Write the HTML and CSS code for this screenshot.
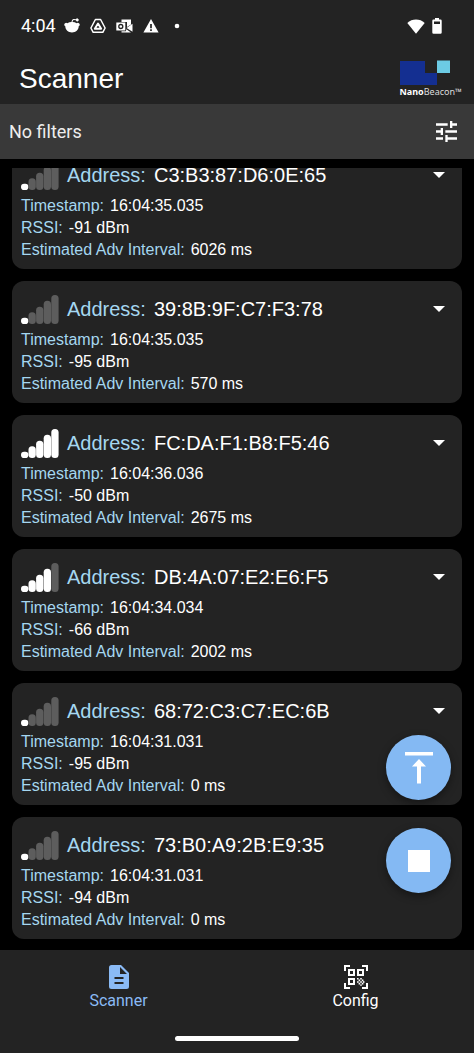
FILE: index.html
```html
<!DOCTYPE html>
<html lang="en">
<head>
<meta charset="utf-8">
<meta name="viewport" content="width=device-width, initial-scale=1">
<title>Scanner</title>
<link rel="stylesheet" href="styles.css">
</head>
<body>
<svg class="defs" aria-hidden="true">
  <symbol id="signal" viewBox="0 0 38 29">
    <rect class="b1" x="0" y="22.800" width="7.400" height="6.200" rx="3.100"/>
    <rect class="b2" x="7.500" y="17.300" width="7.300" height="11.700" rx="3.500"/>
    <rect class="b3" x="15.100" y="11.700" width="7.300" height="17.300" rx="3.500"/>
    <rect class="b4" x="22.700" y="5.700" width="7.300" height="23.300" rx="3.500"/>
    <rect class="b5" x="30.300" y="0" width="7.300" height="29" rx="3.500"/>
  </symbol>
  <symbol id="caret" viewBox="0 0 12 6"><path d="M0 0h12L6 6z"/></symbol>
</svg>
<div class="app">
  <header class="top">
    <div class="status">
      <span class="clock">4:04</span>
      <svg class="s-icon" viewBox="0 0 16 16"><path d="M.3 6.200a1.900 1.900 0 0 1 3-1C4.600 4.500 6.100 4.200 7.500 4.100 7.700 2.500 8.300.9 9.800.9L12 1.300a1.400 1.400 0 1 1-.1 1L9.900 1.900C9 1.900 8.700 3 8.500 4.100c1.600.1 3 .5 4.200 1.100a1.900 1.900 0 0 1 3 1c.2 1-.3 1.700-1 2.100C14.700 12 11.700 14.500 8 14.500S1.300 12 1.300 8.300C.6 7.900.1 7.200.3 6.200z" fill="#fff"/></svg>
      <svg class="s-icon" viewBox="0 0 16 16" fill="none" stroke="#fff" stroke-width="1.500" stroke-linejoin="round"><path d="M5.400 1.500h5.200l4.500 8.500-2.300 4.300H3.200L.9 10z"/><path d="M8 5.500l3.200 5.300H4.800z" stroke-width="1.900"/></svg>
      <svg class="s-icon wide" viewBox="0 0 17 16"><path d="M5.500 1.500H15v5L11 9V4H5.500z" fill="#fff"/><path d="M16.500 5.800v8L10.500 10z" fill="#fff"/><path d="M5.500 13.200h4.300l.6-2 4.600 3.200H5.500z" fill="#fff"/><rect x=".3" y="4.500" width="9" height="8" fill="#fff"/><circle cx="4.800" cy="8.500" r="2" fill="none" stroke="#232323" stroke-width="1.300"/></svg>
      <svg class="s-icon" viewBox="0 0 16 16"><path d="M8 1l7.600 13.500H.4z" fill="#fff"/><path d="M8 6v4.200M8 11.300v1.700" stroke="#232323" stroke-width="1.700"/></svg>
      <svg class="s-icon" viewBox="0 0 16 16"><circle cx="8" cy="8" r="2.300" fill="#fff"/></svg>
      <span class="fill"></span>
      <svg class="wifi" viewBox="0 0 18 15"><path d="M.3 4C5-.6 13-.6 17.700 4L9 14.700z" fill="#fff"/></svg>
      <svg class="battery" viewBox="0 0 10 16"><path fill="#fff" fill-rule="evenodd" d="M3 0h4v1.500h1.500a1.200 1.200 0 0 1 1.200 1.200v11.800a1.200 1.200 0 0 1-1.200 1.200h-7a1.200 1.200 0 0 1-1.200-1.200V2.700a1.200 1.200 0 0 1 1.200-1.200H3zM2 3.500v2.600h6V3.500z"/></svg>
    </div>
    <div class="titlebar">
      <h1>Scanner</h1>
      <div class="logo">
        <svg viewBox="0 0 50 26"><path d="M0 1h25v12h12v12H0z" fill="#142f91"/><rect x="37" y="0.500" width="13" height="12.500" fill="#6ccbe4"/></svg>
        <span class="brand"><b>Nano</b>Beacon™</span>
      </div>
    </div>
  </header>
  <div class="filters">
    <span>No filters</span>
    <button aria-label="Edit filters"><svg viewBox="3 3 18 18"><path fill="#fff" d="M3 17v2h6v-2H3zM3 5v2h10V5H3zm10 16v-2h8v-2h-8v-2h-2v6h2zM7 9v2H3v2h4v2h2V9H7zm14 4v-2H11v2h10zm-6-4h2V7h4V5h-4V3h-2v6z"/></svg></button>
  </div>
  <main>
    <div class="list">
      <article class="card">
        <div class="head"><svg class="signal l1"><use href="#signal"/></svg><h2><span class="k">Address:</span><span>C3:B3:87:D6:0E:65</span></h2><button aria-label="Expand"><svg><use href="#caret"/></svg></button></div>
        <p><span class="k">Timestamp:</span><span>16:04:35.035</span></p>
        <p><span class="k">RSSI:</span><span>-91 dBm</span></p>
        <p><span class="k">Estimated Adv Interval:</span><span>6026 ms</span></p>
      </article>
      <article class="card">
        <div class="head"><svg class="signal l1"><use href="#signal"/></svg><h2><span class="k">Address:</span><span>39:8B:9F:C7:F3:78</span></h2><button aria-label="Expand"><svg><use href="#caret"/></svg></button></div>
        <p><span class="k">Timestamp:</span><span>16:04:35.035</span></p>
        <p><span class="k">RSSI:</span><span>-95 dBm</span></p>
        <p><span class="k">Estimated Adv Interval:</span><span>570 ms</span></p>
      </article>
      <article class="card">
        <div class="head"><svg class="signal l5"><use href="#signal"/></svg><h2><span class="k">Address:</span><span>FC:DA:F1:B8:F5:46</span></h2><button aria-label="Expand"><svg><use href="#caret"/></svg></button></div>
        <p><span class="k">Timestamp:</span><span>16:04:36.036</span></p>
        <p><span class="k">RSSI:</span><span>-50 dBm</span></p>
        <p><span class="k">Estimated Adv Interval:</span><span>2675 ms</span></p>
      </article>
      <article class="card">
        <div class="head"><svg class="signal l4"><use href="#signal"/></svg><h2><span class="k">Address:</span><span>DB:4A:07:E2:E6:F5</span></h2><button aria-label="Expand"><svg><use href="#caret"/></svg></button></div>
        <p><span class="k">Timestamp:</span><span>16:04:34.034</span></p>
        <p><span class="k">RSSI:</span><span>-66 dBm</span></p>
        <p><span class="k">Estimated Adv Interval:</span><span>2002 ms</span></p>
      </article>
      <article class="card">
        <div class="head"><svg class="signal l1"><use href="#signal"/></svg><h2><span class="k">Address:</span><span>68:72:C3:C7:EC:6B</span></h2><button aria-label="Expand"><svg><use href="#caret"/></svg></button></div>
        <p><span class="k">Timestamp:</span><span>16:04:31.031</span></p>
        <p><span class="k">RSSI:</span><span>-95 dBm</span></p>
        <p><span class="k">Estimated Adv Interval:</span><span>0 ms</span></p>
      </article>
      <article class="card">
        <div class="head"><svg class="signal l1"><use href="#signal"/></svg><h2><span class="k">Address:</span><span>73:B0:A9:2B:E9:35</span></h2><button aria-label="Expand"><svg><use href="#caret"/></svg></button></div>
        <p><span class="k">Timestamp:</span><span>16:04:31.031</span></p>
        <p><span class="k">RSSI:</span><span>-94 dBm</span></p>
        <p><span class="k">Estimated Adv Interval:</span><span>0 ms</span></p>
      </article>
    </div>
    <div class="fabs">
      <button aria-label="Scroll to top"><svg viewBox="0 0 28 32" width="28" height="32"><path fill="#fff" d="M0 0h28v3.500H0zM14 7l7 7.500h-5V31.500h-4V14.500H7z"/></svg></button>
      <button aria-label="Stop scanning"><svg viewBox="0 0 22 22" width="22" height="22"><path fill="#fff" d="M0 0h22v22H0z"/></svg></button>
    </div>
  </main>
  <footer>
    <nav>
      <a class="active" href="#scanner"><svg viewBox="0 0 24 24"><path fill="currentColor" fill-rule="evenodd" d="M4.500 0H14l8 8v13.500a2.500 2.500 0 0 1-2.500 2.500h-15A2.500 2.500 0 0 1 2 21.500v-19A2.500 2.500 0 0 1 4.500 0zM13 2v7h7zM7.500 12v2h9v-2zm0 5v2h9v-2z"/></svg>Scanner</a>
      <a href="#config"><svg viewBox="0 0 24 24" fill="none" stroke="#fff" stroke-width="2"><path d="M1 6V1h5M18 1h5v5M23 18v5h-5M6 23H1v-5"/><path d="M5 5h5v5H5zM14 5h5v5h-5zM5 14h5v5H5z"/><path fill="#fff" stroke="none" d="M13 13h1.600v1.600H13zM16.200 13h1.600v1.600h-1.600zM14.600 14.600h1.600v1.600h-1.600zM17.800 14.600h1.600v1.600h-1.600zM13 16.200h1.600v1.600H13zM16.200 16.200h1.600v1.600h-1.600zM19 16.200h1.500v1.600H19zM14.600 17.800h1.600v1.600h-1.600zM17.800 17.800h1.600v1.600h-1.600zM16.200 19.400h1.600v1.400h-1.600z"/></svg>Config</a>
    </nav>
    <div class="gesture"></div>
  </footer>
</div>
</body>
</html>
```
FILE: styles.css
```css
* { box-sizing: border-box; }
body { margin: 0; background: #000; color: #fff; font-family: "Liberation Sans", Arial, sans-serif; }
h1, h2, p { margin: 0; font-weight: 400; }
button { border: 0; padding: 0; background: none; color: inherit; cursor: pointer; }
svg { display: block; flex: none; }
.defs { position: absolute; width: 0; height: 0; }

.app { display: flex; flex-direction: column; height: 100vh; }

.top { background: #232323; padding-bottom: 6px; }
.status { display: flex; align-items: center; gap: 10px; height: 52px; padding: 0 32px 0 21px; }
.clock { font: 400 18px/20px Roboto, sans-serif; margin-right: -2px; }
.s-icon { width: 16px; height: 16px; }
.wide { width: 17px; }
.fill { flex: 1; }
.wifi { width: 18px; height: 15px; margin-right: -3px; }
.battery { width: 10px; height: 16px; }

.titlebar { display: flex; align-items: center; justify-content: space-between; height: 46px; padding: 8px 12px 0 19px; }
.titlebar h1 { font-size: 28px; line-height: 36px; }
.logo svg { width: 50px; height: 26px; }
.brand { display: block; font: 9px/12px "Noto Sans", sans-serif; color: #ddd; }
.brand b { color: #fff; }

.filters { display: flex; align-items: center; justify-content: space-between; height: 55px; padding: 0 17px 0 9px; background: #393939; color: #eee; font: 18px/24px Roboto, sans-serif; }
.filters svg { width: 21px; height: 21px; }

main { position: relative; flex: 1; min-height: 0; padding-top: 9px; display: flex; }
.list { flex: 1; min-width: 0; overflow: hidden; display: flex; flex-direction: column; justify-content: flex-end; gap: 12px; padding: 0 12px 11px; }
.card { flex: none; background: #232323; border-radius: 12px; padding: 13px 17px 8px 9px; }
.head { display: flex; align-items: center; gap: 8px; height: 30px; margin-bottom: 5px; }
.head h2 { flex: 1; display: flex; gap: 8px; font-size: 20px; line-height: 28px; white-space: nowrap; }
.head button svg { width: 12px; height: 6px; fill: #fff; }
.card p { display: flex; gap: 6px; font-size: 16px; line-height: 22px; white-space: nowrap; }
.k { color: #a5d7f0; }

.signal { width: 38px; height: 29px; --b2: #5d5d5d; --b3: #5d5d5d; --b4: #5d5d5d; --b5: #5d5d5d; }
.l4 { --b2: #fff; --b3: #fff; --b4: #fff; }
.l5 { --b2: #fff; --b3: #fff; --b4: #fff; --b5: #fff; }
.b1 { fill: #fff; }
.b2 { fill: var(--b2); }
.b3 { fill: var(--b3); }
.b4 { fill: var(--b4); }
.b5 { fill: var(--b5); }

.fabs { position: absolute; right: 23px; bottom: 57px; display: flex; flex-direction: column; gap: 28px; }
.fabs button { display: flex; align-items: center; justify-content: center; width: 65px; height: 65px; border-radius: 50%; background: #84b9f3; box-shadow: 0 3px 8px rgba(0, 0, 0, .4); }

footer { background: #232323; padding-bottom: 12px; }
nav { display: flex; height: 86px; padding-top: 15px; }
nav a { flex: 1; display: flex; flex-direction: column; align-items: center; gap: 2px; color: #fff; text-decoration: none; font: 16px/20px Roboto, sans-serif; }
nav svg { width: 24px; height: 24px; }
nav .active { color: #8abaf5; }
.gesture { width: 124px; height: 5px; margin: 0 auto; border-radius: 3px; background: #fff; }
```
